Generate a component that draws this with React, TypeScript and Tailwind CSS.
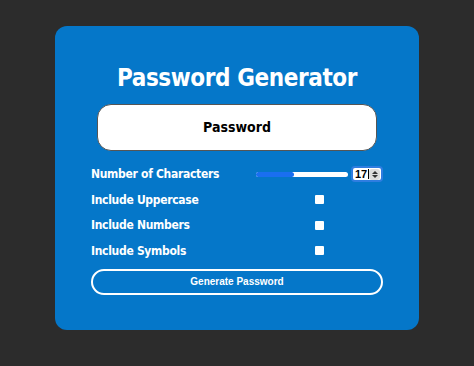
export default function App() {
  const label = "text-white font-bold text-[12px] leading-none tracking-[-0.3px]";
  const rows = ["Include Uppercase", "Include Numbers", "Include Symbols"];
  return (
    <div className="w-[474px] h-[366px] bg-[#2c2c2c] pt-[26px] pl-[55px]" style={{ fontFamily: '"DejaVu Sans Condensed", "DejaVu Sans", Verdana, sans-serif' }}>
      <div className="w-[364px] h-[304px] bg-[#0577c9] rounded-[12px] px-[36px] pt-[37px] flex flex-col">
        <h1 className="text-white font-bold text-[24px] leading-[30px] tracking-[-0.4px] text-center">Password Generator</h1>
        <div className="mt-[11px] mx-[6px] h-[47px] bg-white rounded-[14px] border border-[#555] flex items-center justify-center">
          <span className="text-black font-bold text-[14px]">Password</span>
        </div>
        <div className="mt-[15px] h-[16px] flex items-center">
          <span className={label}>Number of Characters</span>
          <div className="ml-auto flex items-center">
            <div className="w-[92px] h-[5px] rounded-full bg-white flex">
              <div className="w-[38px] h-full rounded-full bg-[#1a6ff0]" />
            </div>
            <div className="ml-[3px] w-[32px] h-[16px] bg-white border-2 border-[#2f7de0] rounded-[4px] flex items-center pl-[2px] pr-[1px]">
              <span className="text-black font-bold text-[11px] leading-none" style={{ fontFamily: '"Liberation Sans", Arial, sans-serif' }}>17</span>
              <span className="w-[1px] h-[10px] bg-black ml-[1px]" />
              <div className="ml-auto w-[12px] h-[11px] rounded-[3px] bg-[#ddd] flex flex-col items-center justify-center gap-[1px]">
                <svg width="6" height="3" viewBox="0 0 6 3"><path d="M0 3 L3 0 L6 3 Z" fill="#333" /></svg>
                <svg width="6" height="3" viewBox="0 0 6 3"><path d="M0 0 L3 3 L6 0 Z" fill="#333" /></svg>
              </div>
            </div>
          </div>
        </div>
        {rows.map((r) => (
          <div key={r} className="mt-[9.5px] h-[16px] flex items-center">
            <span className={label}>{r}</span>
            <div className="ml-[auto] mr-[59px] w-[9px] h-[9px] bg-white rounded-[1px]" />
          </div>
        ))}
        <button className="mt-[10px] h-[26px] w-full rounded-full border-2 border-white text-white font-bold text-[10px]" style={{ fontFamily: '"Liberation Sans", Arial, sans-serif' }}>
          Generate Password
        </button>
      </div>
    </div>
  );
}
